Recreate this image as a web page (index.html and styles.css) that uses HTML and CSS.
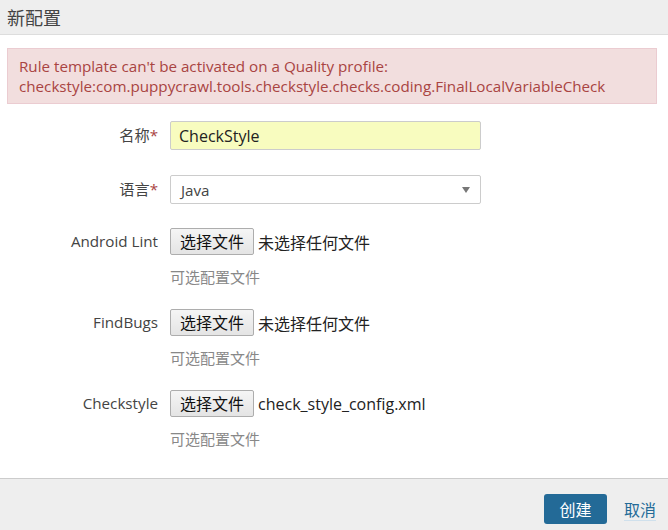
FILE: index.html
```html
<!DOCTYPE html>
<html lang="zh">
<head>
  <meta charset="UTF-8" />
  <title>新配置</title>
  <link rel="stylesheet" href="styles.css">
</head>
<body>
  <div class="modal">
    <!-- Header -->
    <div class="modal-head">
      <h2>新配置</h2>
    </div>

    <!-- Body -->
    <div class="modal-body">
      <div class="alert">
        Rule template can't be activated on a Quality profile:<br>
        checkstyle:com.puppycrawl.tools.checkstyle.checks.coding.FinalLocalVariableCheck
      </div>

      <div class="form-row row-name">
        <label class="form-label">名称<em>*</em></label>
        <div class="form-field">
          <input class="text-input" type="text" value="CheckStyle">
        </div>
      </div>

      <div class="form-row">
        <label class="form-label">语言<em>*</em></label>
        <div class="form-field">
          <div class="select-box">
            <span>Java</span>
            <span class="select-arrow"></span>
          </div>
        </div>
      </div>

      <div class="form-row row-file">
        <label class="form-label label-file">Android Lint</label>
        <div class="form-field">
          <div class="file-pick">
            <span class="file-btn">选择文件</span>
            <span class="file-name">未选择任何文件</span>
          </div>
          <div class="help">可选配置文件</div>
        </div>
      </div>

      <div class="form-row row-file">
        <label class="form-label label-file">FindBugs</label>
        <div class="form-field">
          <div class="file-pick">
            <span class="file-btn">选择文件</span>
            <span class="file-name">未选择任何文件</span>
          </div>
          <div class="help">可选配置文件</div>
        </div>
      </div>

      <div class="form-row row-file">
        <label class="form-label label-file">Checkstyle</label>
        <div class="form-field">
          <div class="file-pick">
            <span class="file-btn">选择文件</span>
            <span class="file-name file-latin">check_style_config.xml</span>
          </div>
          <div class="help">可选配置文件</div>
        </div>
      </div>
    </div>

    <!-- Footer -->
    <div class="modal-foot">
      <button class="btn-primary">创建</button>
      <a class="link-cancel" href="#">取消</a>
    </div>
  </div>
</body>
</html>
```

FILE: styles.css
```css
body {
  margin: 0;
  font-family: "Open Sans", "Noto Sans CJK SC", sans-serif;
  font-size: 15.2px;
  color: #444;
  background: #fff;
}

.modal {
  width: 668px;
  height: 530px;
  display: flex;
  flex-direction: column;
  overflow: hidden;
}

/* Header */
.modal-head {
  height: 35px;
  background-color: #eee;
  border-bottom: 1px solid #ddd;
  box-sizing: border-box;
  padding: 0 7px;
  display: flex;
  align-items: center;
}

.modal-head h2 {
  margin: 0;
  font-size: 18px;
  font-weight: normal;
  color: #444;
  font-family: "Noto Sans CJK SC", sans-serif;
}

/* Body */
.modal-body {
  flex: 1;
  padding: 13px 11px 0 7px;
}

.alert {
  background-color: #f2dede;
  border: 1px solid #ebccd1;
  color: #a94442;
  padding: 7px 11px;
  line-height: 20px;
  margin-bottom: 17px;
}

.form-row {
  display: grid;
  grid-template-columns: 151px 311px;
  column-gap: 12px;
  margin-bottom: 24px;
}

.form-row.row-name {
  margin-bottom: 25px;
}

.form-row.row-file {
  margin-bottom: 22px;
}

.form-label {
  text-align: right;
  line-height: 29px;
  color: #444;
}

.form-label em {
  font-style: normal;
  color: #a94442;
}

.form-label.label-file {
  line-height: 27px;
}

.text-input {
  width: 100%;
  height: 29px;
  box-sizing: border-box;
  border: 1px solid #ccc;
  border-radius: 2px;
  background-color: #f8fcbf;
  padding: 0 8px;
  font-family: "Open Sans", sans-serif;
  font-size: 16px;
  color: #222;
  outline: none;
}

.select-box {
  height: 29px;
  box-sizing: border-box;
  border: 1px solid #ccc;
  border-radius: 2px;
  padding: 0 10px;
  display: flex;
  align-items: center;
  justify-content: space-between;
  color: #444;
}

.select-arrow {
  width: 0;
  height: 0;
  border-left: 4px solid transparent;
  border-right: 4px solid transparent;
  border-top: 6px solid #777;
}

/* File inputs */
.file-pick {
  display: flex;
  align-items: center;
  height: 27px;
}

.file-btn {
  height: 27px;
  box-sizing: border-box;
  padding: 0 9px;
  border: 1px solid #adadad;
  border-radius: 2px;
  background: linear-gradient(#f5f5f5, #e4e4e4);
  color: #111;
  font-family: "Noto Sans CJK SC", sans-serif;
  font-size: 16px;
  line-height: 25px;
}

.file-name {
  margin-left: 4px;
  color: #222;
  font-family: "Noto Sans CJK SC", sans-serif;
  font-size: 16px;
}

.file-name.file-latin {
  font-family: "Open Sans", sans-serif;
}

.help {
  margin-top: 12px;
  line-height: 20px;
  font-size: 15px;
  color: #888;
  font-family: "Noto Sans CJK SC", sans-serif;
}

/* Footer */
.modal-foot {
  height: 52px;
  box-sizing: border-box;
  border-top: 1px solid #ccc;
  background-color: #eee;
  padding: 15px 12px 0 0;
  display: flex;
  justify-content: flex-end;
  align-items: flex-start;
  gap: 17px;
}

.btn-primary {
  height: 30px;
  width: 63px;
  border: none;
  border-radius: 3px;
  background-color: #236a97;
  color: #fff;
  font-family: "Noto Sans CJK SC", sans-serif;
  font-size: 16px;
  cursor: pointer;
}

.link-cancel {
  margin-top: 4px;
  color: #236a97;
  font-family: "Noto Sans CJK SC", sans-serif;
  font-size: 16px;
  line-height: 22px;
  text-decoration: none;
  border-bottom: 1px solid #cfe0ec;
}
```
